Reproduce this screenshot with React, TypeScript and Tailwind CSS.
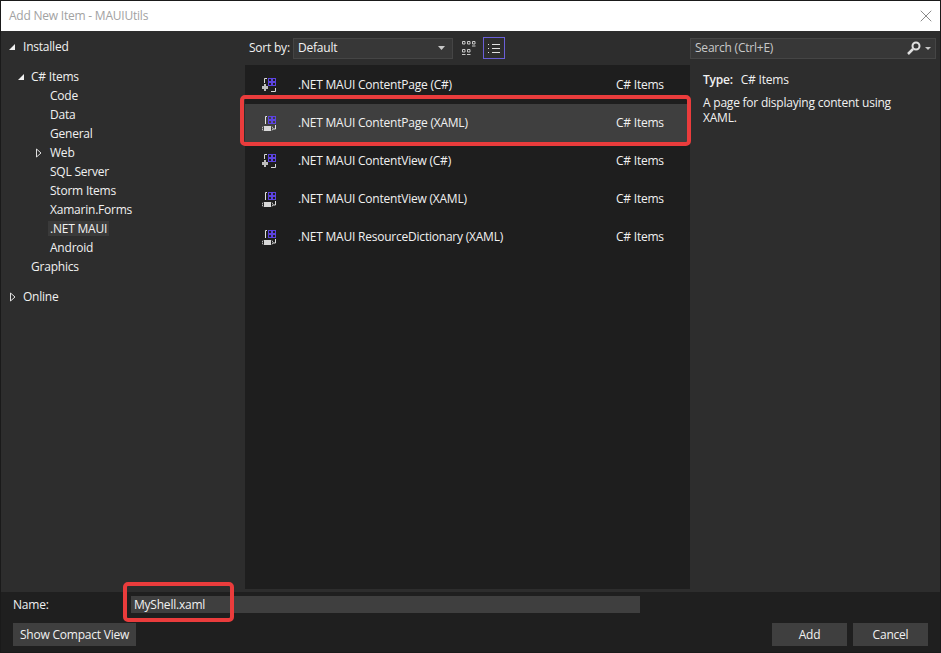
import React from 'react';
import { X } from 'lucide-react';

const templates = [
  { name: '.NET MAUI ContentPage (C#)', kind: 'cs' },
  { name: '.NET MAUI ContentPage (XAML)', kind: 'xaml', selected: true },
  { name: '.NET MAUI ContentView (C#)', kind: 'cs' },
  { name: '.NET MAUI ContentView (XAML)', kind: 'xaml' },
  { name: '.NET MAUI ResourceDictionary (XAML)', kind: 'xaml' },
];

const treeItems = [
  { label: 'Code' },
  { label: 'Data' },
  { label: 'General' },
  { label: 'Web', collapsed: true },
  { label: 'SQL Server' },
  { label: 'Storm Items' },
  { label: 'Xamarin.Forms' },
  { label: '.NET MAUI', active: true },
  { label: 'Android' },
];

function Expanded() {
  return (
    <svg width="8" height="8" viewBox="0 0 8 8" className="shrink-0">
      <path d="M7 1v6H1z" fill="#f1f1f1" />
    </svg>
  );
}

function Collapsed() {
  return (
    <svg width="6" height="10" viewBox="0 0 6 10" className="shrink-0">
      <path d="M.5 1l4.500 4-4.500 4z" fill="none" stroke="#e0e0e0" />
    </svg>
  );
}

function ItemIcon({ kind }: { kind: string }) {
  return (
    <svg width="16" height="16" viewBox="0 0 16 16" className="shrink-0">
      {/* four small hollow squares */}
      <g fill="none" stroke="#5c43e0">
        <rect x="6.500" y="1.500" width="3" height="3" />
        <rect x="10.500" y="1.500" width="3" height="3" />
        <rect x="6.500" y="5.500" width="3" height="3" />
        <rect x="10.500" y="5.500" width="3" height="3" />
      </g>
      {kind === 'cs' ? (
        <>
          <path d="M2.500 6V1.500H5M13.500 11v3.500H9" fill="none" stroke="#d8d8d8" />
          <path d="M2 7h2v2h2v3H4v2H2v-2H0V9h2z" fill="#bdbdbd" />
        </>
      ) : (
        <>
          <path d="M3.500 9V1.500H5M13.500 10v4H11" fill="none" stroke="#e0e0e0" />
          <rect x="2" y="11" width="7" height="5" fill="#d8d8d8" />
          <path d="M1 11.500L0 13.500l1 2M10 11.500l1 2-1 2" fill="none" stroke="#b8b8b8" />
        </>
      )}
    </svg>
  );
}

export default function App() {
  return (
    <div className="relative w-[941px] h-[653px] overflow-hidden bg-[#1a1a1a] p-px flex flex-col text-[12px] leading-4 tracking-[-0.22px] text-[#f1f1f1] font-['Open_Sans','Noto_Sans',sans-serif]">
      {/* Title bar */}
      <div className="h-[30px] shrink-0 bg-white flex items-center justify-between pl-2 pr-[4px] text-[#a2a2a2]">
        <span>Add New Item - MAUIUtils</span>
        <X size={20} strokeWidth={1.200} className="text-[#8a8a8a]" />
      </div>

      {/* Body */}
      <div className="flex-1 min-h-0 bg-[#2d2d2d] flex pb-[3px]">
        <aside className="w-[244px] shrink-0 pt-[8px] pl-[7px]">
          <div className="h-4 flex items-center gap-[7px]"><Expanded /><span>Installed</span></div>
          <div className="mt-[12px] pl-[9px]">
            <div className="h-[19px] flex items-center gap-[6px]"><Expanded /><span>C# Items</span></div>
            <ul className="pl-[3px]">
              {treeItems.map((item) => (
                <li key={item.label} className="h-[19px] flex items-center">
                  <span className="w-[22px] flex justify-end">{item.collapsed && <Collapsed />}</span>
                  <span className={`h-[15px] leading-[15px] pl-[2px] pr-[2px] ml-[6px] ${item.active ? 'bg-[#3a3a3a]' : ''}`}>{item.label}</span>
                </li>
              ))}
            </ul>
            <div className="h-[19px] flex items-center pl-[14px]">Graphics</div>
          </div>
          <div className="mt-[11px] h-[19px] flex items-center pl-[2px] gap-[7px]"><Collapsed /><span>Online</span></div>
        </aside>

        <main className="w-[445px] shrink-0 flex flex-col">
          <div className="h-[34px] shrink-0 flex items-center pl-1">
            <span className="w-[44px]">Sort by:</span>
            <div className="w-[160px] h-[21px] bg-[#373737] border border-[#454545] flex items-center justify-between pl-1 pr-1.5">
              <span>Default</span>
              <svg width="8" height="4" viewBox="0 0 8 4"><path d="M0 0h7L3.500 4z" fill="#c8c8c8" /></svg>
            </div>
            <button className="w-[22px] h-[22px] ml-[5px] flex items-center justify-center">
              <svg width="14" height="14" viewBox="0 0 14 14" fill="none" stroke="#c8c8c8">
                <path d="M.5.500h2.500v2.500H.5zM5.500.500H8v2.500H5.500zM10.500.500H13v2.500h-2.500zM.5 8.500h2.500V11H.5zM5.500 8.500H8V11H5.500zM10 5h3.500M0 13.500h3.500M5 13.500h3.500" />
              </svg>
            </button>
            <button className="w-[22px] h-[22px] ml-[3px] flex items-center justify-center border border-[#6a5fd8]">
              <svg width="12" height="11" viewBox="0 0 12 11" stroke="#e0e0e0">
                <path d="M0 1.500h1M4 1.500h8M0 5.500h1M4 5.500h8M0 9.500h1M4 9.500h8" />
              </svg>
            </button>
          </div>
          <div className="flex-1 bg-[#1e1e1e] pt-px">
            {templates.map((t) => (
              <div key={t.name} className={`h-[38px] flex items-center ${t.selected ? 'bg-[#3f3f3f]' : ''}`}>
                <span className="w-[53px] pl-[17px]"><ItemIcon kind={t.kind} /></span>
                <span className="flex-1">{t.name}</span>
                <span className="w-[74px]">C# Items</span>
              </div>
            ))}
          </div>
        </main>

        <aside className="flex-1 flex flex-col">
          <div className="h-[34px] shrink-0 flex items-center">
            <div className="w-[246px] h-[21px] bg-[#373737] border border-[#454545] flex items-center justify-between pl-1 pr-1 text-[#c8c8c8]">
              <span>Search (Ctrl+E)</span>
              <span className="flex items-center gap-1">
                <svg width="14" height="14" viewBox="0 0 14 14" fill="none" stroke="#e0e0e0">
                  <circle cx="9" cy="5" r="3.500" strokeWidth="2" />
                  <path d="M6 8l-5 5" strokeWidth="2.500" />
                </svg>
                <svg width="6" height="3" viewBox="0 0 6 3"><path d="M0 0h6L3 3z" fill="#c8c8c8" /></svg>
              </span>
            </div>
          </div>
          <div className="pl-[13px] pt-[7px]">
            <div className="flex gap-[8px]"><b className="font-semibold">Type:</b><span>C# Items</span></div>
            <p className="mt-[7px] w-[200px] leading-[15px]">A page for displaying content using XAML.</p>
          </div>
        </aside>
      </div>

      {/* Footer */}
      <div className="h-[60px] shrink-0 bg-[#1f1f1f] pl-[12px] pr-[12px] pt-[4px]">
        <div className="flex items-center h-[17px]">
          <span className="w-[118px]">Name:</span>
          <div className="w-[509px] h-[17px] bg-[#3f3f3f] flex items-center pl-[3px]">MyShell.xaml</div>
        </div>
        <div className="flex justify-between mt-[10px]">
          <button className="h-[23px] w-[123px] bg-[#3f3f3f] text-center">Show Compact View</button>
          <div className="flex gap-[6px]">
            <button className="h-[23px] w-[75px] bg-[#3f3f3f]">Add</button>
            <button className="h-[23px] w-[75px] bg-[#3f3f3f]">Cancel</button>
          </div>
        </div>
      </div>

      {/* Red callouts drawn over the screenshot */}
      <div className="absolute left-[240px] top-[95px] w-[451px] h-[51px] rounded-[5px] border-[4px] border-[#ea3c3c]" />
      <div className="absolute left-[123px] top-[582px] w-[111px] h-[40px] rounded-[5px] border-[4px] border-[#ea3c3c]" />
    </div>
  );
}
